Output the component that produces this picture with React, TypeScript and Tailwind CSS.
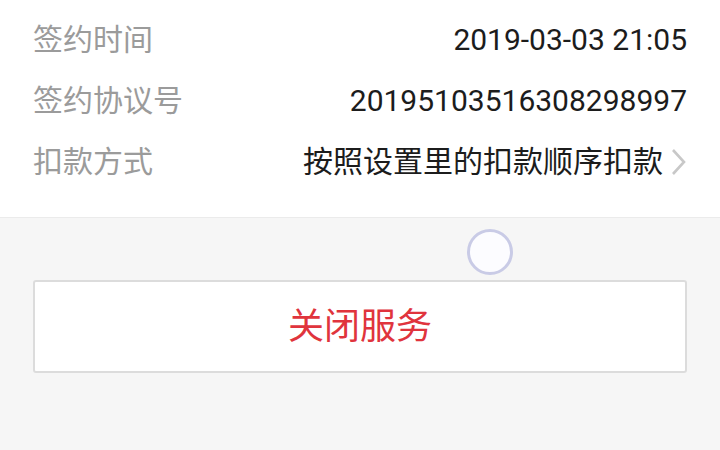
import React from "react";

const font = { fontFamily: "Roboto, 'Noto Sans CJK SC', sans-serif" };

function Row({ label, value, arrow }: { label: string; value: string; arrow?: boolean }) {
  return (
    <div className="flex h-[61px] items-center justify-between">
      <span className="text-[30px] leading-none text-[#9b9b9b]">{label}</span>
      <span className="flex items-center text-[30px] leading-none text-[#1c1c1c]">
        {value}
        {arrow && (
          <svg width="18" height="30" viewBox="0 0 18 30" className="ml-[6px]">
            <path d="M4 3 L15 15 L4 27" fill="none" stroke="#c8c8c8" strokeWidth="2.6" />
          </svg>
        )}
      </span>
    </div>
  );
}

export default function App() {
  return (
    <div className="flex h-[450px] w-[720px] flex-col bg-[#f6f6f6]" style={font}>
      <div className="border-b border-[#ebebeb] bg-white px-[33px] pt-[9px] pb-[25px]">
        <Row label="签约时间" value="2019-03-03 21:05" />
        <Row label="签约协议号" value="20195103516308298997" />
        <Row label="扣款方式" value="按照设置里的扣款顺序扣款" arrow />
      </div>
      <div className="relative px-[33px] pt-[62px]">
        <div className="absolute left-[467px] top-[11px] h-[46px] w-[46px] rounded-full border-[3px] border-[#c9cbe6] bg-[#fcfcff]" />
        <div className="flex h-[93px] items-center justify-center rounded-[3px] border-2 border-[#dcdcdc] bg-white">
          <span className="text-[36px] leading-none text-[#e0343d]">关闭服务</span>
        </div>
      </div>
    </div>
  );
}
